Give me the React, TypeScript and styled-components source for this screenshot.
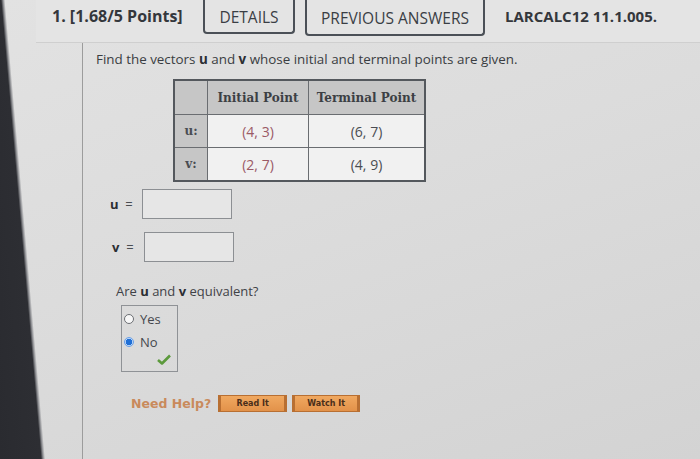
import React from "react";
import styled, { createGlobalStyle } from "styled-components";

const Global = createGlobalStyle`
  html, body {
    margin: 0;
    padding: 0;
    width: 700px;
    height: 459px;
    overflow: hidden;
  }
  body {
    font-family: "Open Sans", "DejaVu Sans", sans-serif;
    color: #3a3d42;
  }
`;

const Screen = styled.div`
  width: 700px;
  height: 459px;
  display: flex;
  flex-direction: column;
  padding-left: 36px;
  box-sizing: border-box;
  background:
    linear-gradient(85deg, #2a2b30 0, #2d2e33 41px, #8e8f93 43px, transparent 45px),
    linear-gradient(160deg, #e2e2e2 0%, #dcdcdc 45%, #d3d3d3 100%);
`;

const Header = styled.div`
  height: 43px;
  display: flex;
  align-items: flex-start;
  background: #e4e4e4;
  border-bottom: 1px solid #cfcfcf;
  box-sizing: border-box;
`;

const Points = styled.div`
  font-weight: 700;
  font-size: 16px;
  padding: 5px 0 0 16px;
  width: 151px;
  color: #34373c;
`;

const Tab = styled.div<{ $w: number; $h: number }>`
  width: ${(p) => p.$w}px;
  height: ${(p) => p.$h}px;
  box-sizing: border-box;
  border: 2px solid #4b5057;
  border-top: none;
  border-radius: 0 0 4px 4px;
  display: flex;
  align-items: center;
  justify-content: center;
  font-size: 15.5px;
  color: #3a3e44;
  padding-top: 1px;
`;

const Code = styled.div`
  font-weight: 700;
  font-size: 15px;
  padding: 6px 0 0 20px;
  color: #34373c;
`;

const Body = styled.div`
  flex: 1;
  display: flex;
`;

const Gutter = styled.div`
  width: 46px;
`;

const Panel = styled.div`
  flex: 1;
  border-left: 1px solid #9c9c9c;
  padding-left: 13px;
  display: flex;
  flex-direction: column;
  align-items: flex-start;
`;

const Prompt = styled.p`
  margin: 7px 0 0 0;
  font-size: 13.4px;
  color: #3a3d42;
`;

const B = styled.b`
  color: #2b2e33;
`;

const PointsTable = styled.table`
  margin: 11px 0 0 77px;
  border-collapse: collapse;
  border: 2px solid #54585d;
  table-layout: fixed;
  width: 247px;
`;

const Th = styled.th<{ $w: number }>`
  width: ${(p) => p.$w}px;
  height: 33px;
  padding: 0;
  background: #c6c6c6;
  border: 1px solid #6a6d71;
  font-family: "DejaVu Serif", "Liberation Serif", serif;
  font-weight: 700;
  font-size: 12px;
  color: #3c3f44;
  white-space: nowrap;
`;

const RowHead = styled.th`
  background: #c6c6c6;
  border: 1px solid #6a6d71;
  height: 32px;
  padding: 0;
  font-family: "DejaVu Serif", "Liberation Serif", serif;
  font-weight: 700;
  font-size: 12px;
  color: #4a4d52;
`;

const Td = styled.td<{ $tint?: boolean }>`
  background: #f1f1f1;
  border: 1px solid #6a6d71;
  text-align: center;
  padding: 0;
  font-size: 14px;
  color: ${(p) => (p.$tint ? "#9b5a66" : "#4a4d52")};
`;

const AnswerRow = styled.div<{ $top: number; $left: number }>`
  display: flex;
  align-items: center;
  margin: ${(p) => p.$top}px 0 0 ${(p) => p.$left}px;
`;

const AnswerLabel = styled.span`
  width: 32px;
  font-size: 13px;
  color: #4a4d52;
  white-space: pre;
`;

const Field = styled.div`
  width: 90px;
  height: 30px;
  box-sizing: border-box;
  border: 1px solid #8c8f93;
  background: #e6e6e6;
`;

const Question = styled.p`
  margin: 20px 0 0 20px;
  font-size: 13px;
  color: #3f4247;
`;

const Choices = styled.div`
  margin: 5px 0 0 25px;
  width: 57px;
  height: 67px;
  box-sizing: border-box;
  border: 1px solid #8f9296;
  padding: 1px 0 0 2px;
  position: relative;
`;

const Choice = styled.label`
  display: flex;
  align-items: center;
  gap: 6px;
  height: 23px;
  font-size: 13px;
  color: #45484d;
`;

const Radio = styled.span<{ $on?: boolean }>`
  width: 10px;
  height: 10px;
  border-radius: 50%;
  box-sizing: border-box;
  border: ${(p) => (p.$on ? "1px solid #6aa0e8" : "1px solid #6b6e73")};
  background: ${(p) =>
    p.$on ? "radial-gradient(circle, #1f6fd6 0 3px, #bcd6f5 3.5px)" : "#f7f7f7"};
`;

const Check = styled.svg`
  position: absolute;
  right: 6px;
  bottom: 6px;
`;

const HelpRow = styled.div`
  display: flex;
  align-items: center;
  margin: 23px 0 0 35px;
  gap: 5px;
`;

const HelpText = styled.span`
  font-family: "DejaVu Sans", sans-serif;
  font-weight: 700;
  font-size: 12.5px;
  color: #c98a5c;
  margin-right: 2px;
`;

const HelpButton = styled.div<{ $w: number }>`
  width: ${(p) => p.$w}px;
  height: 17px;
  box-sizing: border-box;
  border: 1px solid #b86f32;
  border-left-width: 3px;
  border-right-width: 3px;
  background: linear-gradient(#f0a860, #e2924a);
  display: flex;
  align-items: center;
  justify-content: center;
  font-family: "DejaVu Sans", sans-serif;
  font-weight: 700;
  font-size: 8px;
  color: #4a2e1a;
`;

export default function App() {
  return (
    <Screen>
      <Global />
      <Header>
        <Points>1. [1.68/5 Points]</Points>
        <Tab $w={92} $h={34}>DETAILS</Tab>
        <Tab $w={180} $h={36} style={{ marginLeft: 10 }}>
          PREVIOUS ANSWERS
        </Tab>
        <Code>LARCALC12 11.1.005.</Code>
      </Header>
      <Body>
        <Gutter />
        <Panel>
          <Prompt>
            Find the vectors <B>u</B> and <B>v</B> whose initial and terminal points are given.
          </Prompt>
          <PointsTable>
            <thead>
              <tr>
                <Th $w={32}></Th>
                <Th $w={100}>Initial Point</Th>
                <Th $w={115}>Terminal Point</Th>
              </tr>
            </thead>
            <tbody>
              <tr>
                <RowHead>u:</RowHead>
                <Td $tint>(4, 3)</Td>
                <Td>(6, 7)</Td>
              </tr>
              <tr>
                <RowHead>v:</RowHead>
                <Td $tint>(2, 7)</Td>
                <Td>(4, 9)</Td>
              </tr>
            </tbody>
          </PointsTable>
          <AnswerRow $top={7} $left={14}>
            <AnswerLabel>
              <B>u</B>  =
            </AnswerLabel>
            <Field />
          </AnswerRow>
          <AnswerRow $top={13} $left={16}>
            <AnswerLabel>
              <B>v</B>  =
            </AnswerLabel>
            <Field />
          </AnswerRow>
          <Question>
            Are <B>u</B> and <B>v</B> equivalent?
          </Question>
          <Choices>
            <Choice>
              <Radio />
              Yes
            </Choice>
            <Choice>
              <Radio $on />
              No
            </Choice>
            <Check width="14" height="11" viewBox="0 0 14 11">
              <path d="M1 6 L5 9.5 L13 1.5" fill="none" stroke="#5c9a3c" strokeWidth="2.6" strokeLinejoin="round" />
            </Check>
          </Choices>
          <HelpRow>
            <HelpText>Need Help?</HelpText>
            <HelpButton $w={69}>Read It</HelpButton>
            <HelpButton $w={68}>Watch It</HelpButton>
          </HelpRow>
        </Panel>
      </Body>
    </Screen>
  );
}
